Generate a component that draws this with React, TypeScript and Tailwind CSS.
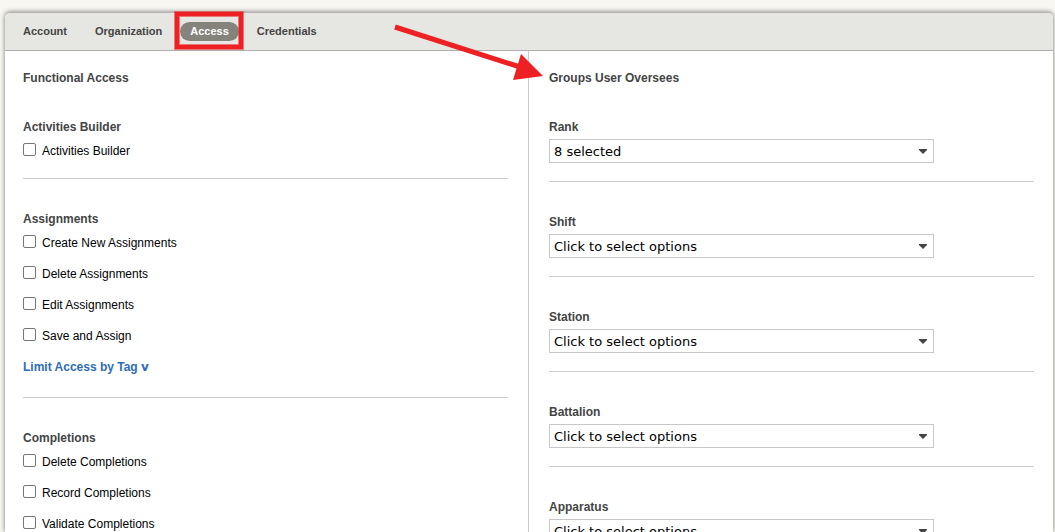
import { useState } from "react";

const tabs = ["Account", "Organization", "Access", "Credentials"];

const permissions = [
  { title: "Activities Builder", items: ["Activities Builder"] },
  {
    title: "Assignments",
    items: [
      "Create New Assignments",
      "Delete Assignments",
      "Edit Assignments",
      "Save and Assign",
    ],
    limitByTag: true,
  },
  {
    title: "Completions",
    items: ["Delete Completions", "Record Completions", "Validate Completions"],
  },
];

const groups = [
  { name: "Rank", value: "8 selected" },
  { name: "Shift", value: "Click to select options" },
  { name: "Station", value: "Click to select options" },
  { name: "Battalion", value: "Click to select options" },
  { name: "Apparatus", value: "Click to select options" },
];

function Tab({
  name,
  active,
  onClick,
}: {
  name: string;
  active: boolean;
  onClick: () => void;
}) {
  return (
    <div className="relative flex">
      <button
        type="button"
        onClick={onClick}
        className={
          active
            ? "h-[19px] px-2.5 rounded-full bg-[#84847c] text-white"
            : "h-[19px] px-2.5 rounded-full text-[#444]"
        }
      >
        {name}
      </button>
      {name === "Access" && (
        <span className="absolute -top-2.5 -bottom-2 -left-[5px] -right-1 border-4 border-[#ed2024] shadow-[0_0_0_1px_#ed202490,inset_0_0_0_1px_#ed202490] pointer-events-none" />
      )}
    </div>
  );
}

function PermissionSection({
  title,
  items,
  limitByTag,
}: {
  title: string;
  items: string[];
  limitByTag?: boolean;
}) {
  return (
    <section className="mb-8 border-b border-[#ccc] pb-3">
      <h3 className="font-bold">{title}</h3>
      {items.map((item) => (
        <label key={item} className="flex h-[31px] items-center gap-1.5 text-black">
          <input
            type="checkbox"
            className="mb-0.5 size-[13px] appearance-none rounded-[2px] border border-[#767676] bg-white checked:bg-[#2a6ebb]"
          />
          <span>{item}</span>
        </label>
      ))}
      {limitByTag && (
        <div className="mb-[3px] flex h-[31px] items-center">
          <a href="#tags" className="font-bold text-[#2e6db4]">
            Limit Access by Tag{" "}
            <span className="font-['DejaVu_Sans',sans-serif]">v</span>
          </a>
        </div>
      )}
    </section>
  );
}

function GroupSelect({ name, value }: { name: string; value: string }) {
  const id = name.toLowerCase();

  return (
    <section className="mb-8 border-b border-[#ccc] pb-[18px]">
      <label htmlFor={id} className="mb-1 block font-bold">
        {name}
      </label>
      <div className="relative max-w-[385px]">
        <select
          id={id}
          className="block h-6 w-full appearance-none border border-[#c8c8c8] bg-white px-1 pt-0.5 font-['DejaVu_Sans',sans-serif] text-[13px] text-black"
        >
          <option>{value}</option>
        </select>
        <svg
          viewBox="0 0 8 5"
          className="absolute right-[7px] top-2.5 h-[5px] w-2 pointer-events-none"
        >
          <path d="M0 0h8v1L4 5 0 1z" fill="#444" />
        </svg>
      </div>
    </section>
  );
}

function App() {
  const [tab, setTab] = useState("Access");

  return (
    <main className="h-screen overflow-hidden bg-[#f8f7f2] pl-[5px] pr-0.5 pt-3 font-['Liberation_Sans',Arial,sans-serif] text-xs text-[#444]">
      <div className="relative flex h-full flex-col rounded-t-[5px] border-t border-[#b5b5b5] bg-white shadow-[0_0_5px_#777]">
        <nav className="flex h-[38px] shrink-0 items-center gap-2 rounded-t-[5px] border-b border-[#b0b0b0] bg-[#e6e7e2] pl-2 text-[11px] font-bold">
          {tabs.map((name) => (
            <Tab
              key={name}
              name={name}
              active={tab === name}
              onClick={() => setTab(name)}
            />
          ))}
        </nav>
        <div className="grid min-h-0 flex-1 grid-cols-2 overflow-hidden">
          <div className="border-r border-[#ccc] pl-[18px] pr-5 pt-[19px]">
            <h2 className="mb-[33px] font-bold">Functional Access</h2>
            {permissions.map((section) => (
              <PermissionSection key={section.title} {...section} />
            ))}
          </div>
          <div className="pl-5 pr-[19px] pt-[19px]">
            <h2 className="mb-[33px] font-bold">Groups User Oversees</h2>
            {groups.map((group) => (
              <GroupSelect key={group.name} {...group} />
            ))}
          </div>
        </div>
        <svg
          viewBox="0 0 150 60"
          className="absolute left-[389px] top-2 h-[60px] w-[150px] pointer-events-none"
        >
          <path d="M1 6L126 46" stroke="#ed2024" strokeWidth="5" />
          <path d="M149 55L127 33L119 59z" fill="#ed2024" />
        </svg>
      </div>
    </main>
  );
}

export default App;
